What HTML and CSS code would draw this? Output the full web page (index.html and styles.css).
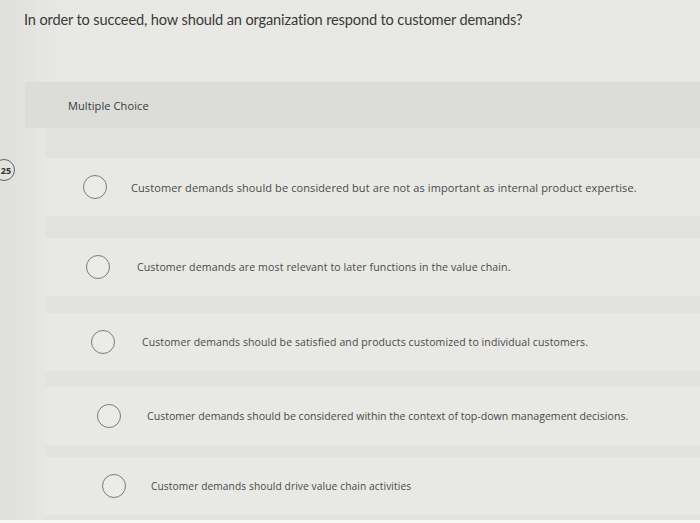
FILE: index.html
```html
<!DOCTYPE html>
<html>
<head>
<meta charset="utf-8">
<link rel="stylesheet" href="styles.css">
</head>
<body>
<div class="screen">
  <div class="badge">25</div>
  <h1 class="question">In order to succeed, how should an organization respond to customer demands?</h1>
  <div class="mc-band"><span class="mc-label">Multiple Choice</span></div>
  <ul class="options">
    <li class="option opt-1"><span class="radio"></span><span class="text">Customer demands should be considered but are not as important as internal product expertise.</span></li>
    <li class="option opt-2"><span class="radio"></span><span class="text">Customer demands are most relevant to later functions in the value chain.</span></li>
    <li class="option opt-3"><span class="radio"></span><span class="text">Customer demands should be satisfied and products customized to individual customers.</span></li>
    <li class="option opt-4"><span class="radio"></span><span class="text">Customer demands should be considered within the context of top-down management decisions.</span></li>
    <li class="option opt-5"><span class="radio"></span><span class="text">Customer demands should drive value chain activities</span></li>
  </ul>
  <div class="bottom-edge"></div>
</div>
</body>
</html>
```

FILE: styles.css
```css
* { box-sizing: border-box; }
html, body {
  margin: 0;
  padding: 0;
  width: 700px;
  height: 523px;
  overflow: hidden;
}
body {
  background: #e5e5e2;
  font-family: "Lato", "Liberation Sans", sans-serif;
  color: #3c3c3c;
}
.screen {
  position: relative;
  width: 700px;
  height: 523px;
  display: flex;
  flex-direction: column;
  background: linear-gradient(to right, #dfdfdc 0px, #e3e3e0 30px, #e8e8e5 60px, #e7e7e4 100%);
}
.badge {
  position: absolute;
  left: -7px;
  top: 159px;
  width: 22px;
  height: 22px;
  border: 1px solid #666;
  border-radius: 50%;
  font-family: "Open Sans", sans-serif;
  font-size: 9px;
  font-weight: 700;
  color: #333;
  display: flex;
  align-items: center;
  justify-content: center;
  padding-left: 4px;
  background: #e3e3e0;
}
.question {
  margin: 0;
  padding: 10px 0 0 24px;
  font-size: 14.6px;
  font-weight: 400;
  line-height: 20px;
  color: #3a3a3a;
  letter-spacing: -0.14px;
  height: 82px;
}
.mc-band {
  margin-left: 25px;
  height: 46px;
  background: #dcdcd9;
  display: flex;
  align-items: center;
  padding-left: 43px;
}
.mc-label {
  font-family: "Open Sans", sans-serif;
  font-size: 11px;
  color: #3a3a3a;
  letter-spacing: 0.1px;
}
.options {
  list-style: none;
  margin: 0;
  padding: 0;
  display: flex;
  flex-direction: column;
  margin-left: 45px;
  flex: 1;
  background: #e2e2df;
}
.option {
  display: flex;
  align-items: center;
  background: #e8e8e5;
  height: 58px;
}
.radio {
  flex: none;
  width: 24px;
  height: 24px;
  border: 1.5px solid #7a7a7a;
  border-radius: 50%;
  background: #ebebe8;
  margin-right: 24px;
}
.text {
  font-family: "Open Sans", sans-serif;
  font-size: 11px;
  color: #4a4a4a;
  letter-spacing: 0.1px;
  white-space: nowrap;
}
.opt-1 { padding-left: 38px; margin-top: 30px; }
.opt-2 { padding-left: 41px; margin-top: 22px; }
.opt-3 { padding-left: 46px; margin-top: 17px; }
.opt-4 { padding-left: 52px; margin-top: 16px; }
.opt-5 { padding-left: 57px; margin-top: 12px; }
.opt-1 .radio { margin-right: 24px; }
.opt-2 .radio { margin-right: 27px; }
.opt-3 .radio { margin-right: 27px; }
.opt-4 .radio { margin-right: 26px; }
.opt-5 .radio { margin-right: 25px; }
.opt-2 .text { font-size: 10.6px; }
.opt-3 .text { font-size: 10.5px; }
.opt-4 .text { font-size: 10.6px; letter-spacing: 0; }
.opt-5 .text { font-size: 10.2px; }
.bottom-edge {
  height: 3px;
  background: #f6f6f4;
  flex: none;
}
```
